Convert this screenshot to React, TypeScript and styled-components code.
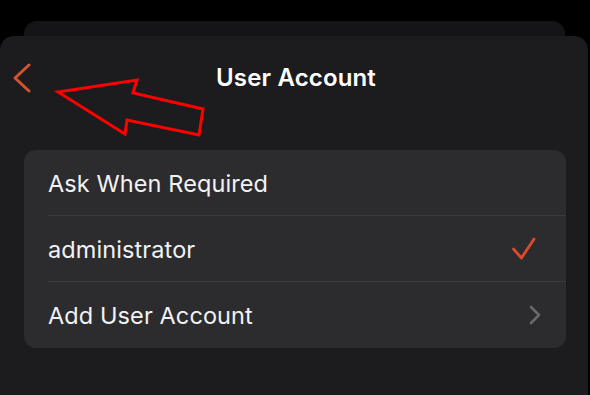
import styled, { createGlobalStyle } from "styled-components";

const GlobalStyle = createGlobalStyle`
  html, body {
    margin: 0;
    padding: 0;
    background: #000;
  }
  body {
    font-family: Inter, "Noto Sans", "Liberation Sans", sans-serif;
    -webkit-font-smoothing: antialiased;
  }
`

const Screen = styled.div`
  width: 590px;
  height: 395px;
  overflow: hidden;
  background: #000;
  padding-top: 21px;
  box-sizing: border-box;
`

const BackSheet = styled.div`
  margin: 0 25px 0 24px;
  height: 15px;
  background: #151517;
  border-radius: 13px 13px 0 0;
`

const Sheet = styled.div`
  position: relative;
  margin-right: 2px;
  height: 380px;
  background: #1c1c1e;
  border-radius: 14px 14px 0 0;
  padding: 0 22px 0 24px;
  box-sizing: border-box;
`

const NavBar = styled.div`
  position: relative;
  height: 114px;
  display: flex;
  justify-content: center;
  padding: 27px 0 0 0;
  margin-right: -2px;
  box-sizing: border-box;
`

const BackButton = styled.button`
  position: absolute;
  left: -14px;
  top: 27px;
  width: 24px;
  height: 30px;
  padding: 0;
  border: none;
  background: none;
  display: flex;
  align-items: center;
  justify-content: center;
`

const Title = styled.h1`
  margin: 0;
  font-size: 24px;
  line-height: 30px;
  font-weight: 600;
  color: #fff;
  letter-spacing: 0.15px;
`

const List = styled.div`
  background: #2c2c2e;
  border-radius: 12px;
  overflow: hidden;
`

const Row = styled.div<{ $last?: boolean }>`
  display: flex;
  align-items: center;
  height: 66px;
  padding-left: 24px;
  box-sizing: border-box;
  position: relative;
  &::after {
    content: "";
    display: ${(p) => (p.$last ? "none" : "block")};
    position: absolute;
    left: 24px;
    right: 0;
    bottom: 0;
    height: 1px;
    background: #3a3a3d;
  }
`

const Label = styled.span`
  flex: 1;
  font-size: 23.5px;
  color: #f2f2f4;
  letter-spacing: 0.1px;
`

const Accessory = styled.div`
  display: flex;
  justify-content: flex-end;
  align-items: center;
  padding-right: 25px;
`

const Annotation = styled.svg`
  position: absolute;
  left: 0;
  top: 0;
  pointer-events: none;
`

const rows = [
  { label: "Ask When Required", kind: "none" },
  { label: "administrator", kind: "check" },
  { label: "Add User Account", kind: "chevron" },
]

export default function App() {
  return (
    <>
      <GlobalStyle />
      <Screen>
        <BackSheet />
        <Sheet>
          <NavBar>
            <BackButton aria-label="Back">
              <svg width="18" height="30" viewBox="0 0 18 30">
                <path d="M16 2 L2 15 L16 28" fill="none" stroke="#d4532f" strokeWidth="3" strokeLinecap="round" strokeLinejoin="round" />
              </svg>
            </BackButton>
            <Title>User Account</Title>
          </NavBar>
          <List>
            {rows.map((r, i) => (
              <Row key={r.label} $last={i === rows.length - 1}>
                <Label>{r.label}</Label>
                <Accessory>
                  {r.kind === "check" && (
                    <svg width="24" height="24" viewBox="0 0 24 24" style={{ marginRight: 5 }}>
                      <path d="M1.5 12 L9.5 21 L22 2" fill="none" stroke="#db4a2b" strokeWidth="2.8" strokeLinecap="round" strokeLinejoin="round" />
                    </svg>
                  )}
                  {r.kind === "chevron" && (
                    <svg width="12" height="20" viewBox="0 0 12 20">
                      <path d="M2 2 L10 10 L2 18" fill="none" stroke="#68686d" strokeWidth="2.6" strokeLinecap="round" strokeLinejoin="round" />
                    </svg>
                  )}
                </Accessory>
              </Row>
            ))}
          </List>
          <Annotation width="588" height="160" viewBox="0 0 588 160">
            <polygon
              points="58,56 137,44 133,57 203,73 199,99 127,84 125,98"
              fill="none"
              stroke="#ff0000"
              strokeWidth="3"
              strokeLinejoin="miter"
            />
          </Annotation>
        </Sheet>
      </Screen>
    </>
  )
}
